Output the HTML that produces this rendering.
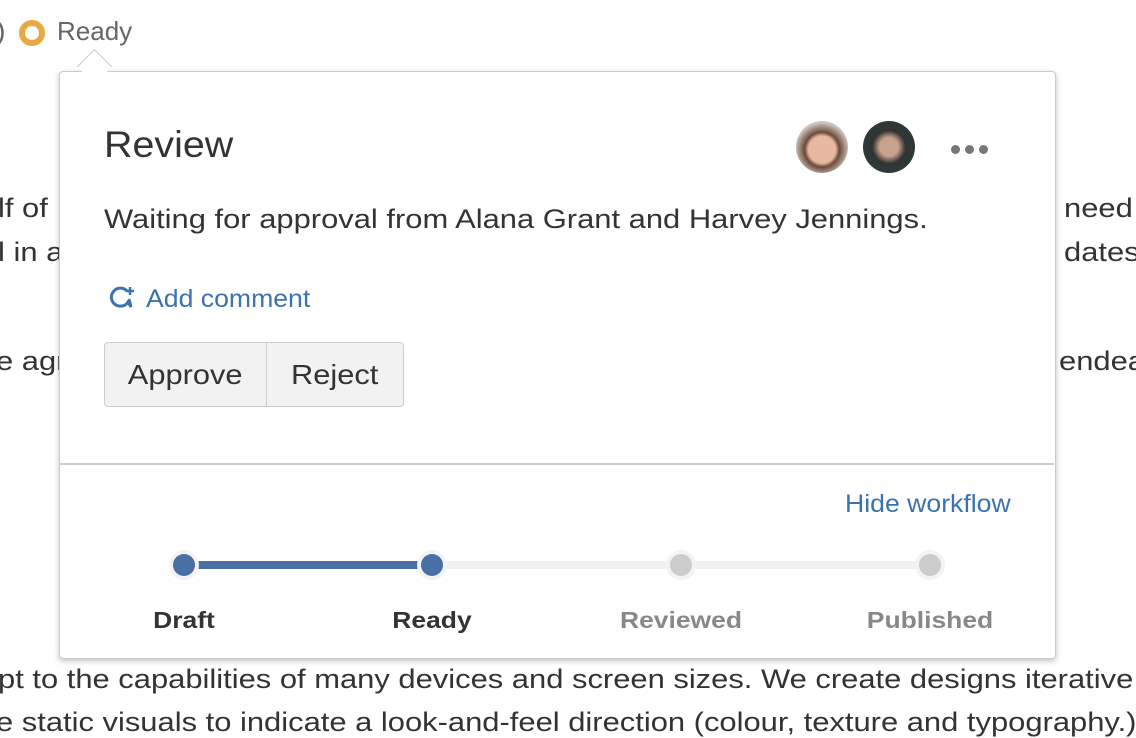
<!DOCTYPE html>
<html><head><style>
body{margin:0;width:1136px;height:726px;overflow:hidden;background:#fff;font-family:"Liberation Sans",sans-serif;color:#333;position:relative}
.t{position:absolute;font-size:27px;white-space:nowrap;color:#333;transform:scaleX(1.145);transform-origin:left center}
.s{transform:scaleX(1.065)}
.card{position:absolute;left:59px;top:71px;width:995px;height:586px;background:#fff;border:1px solid #ccc;border-radius:4px;box-shadow:0 2px 6px rgba(0,0,0,.25)}
.arrow{position:absolute;left:82px;top:54px;width:24px;height:24px;background:#fff;border-left:1px solid #ccc;border-top:1px solid #ccc;transform:rotate(45deg)}
.dot{position:absolute;width:22px;height:22px;border-radius:50%;top:554px;box-shadow:0 0 0 4px #f3f3f3}
.lbl{position:absolute;top:607px;font-weight:bold;font-size:23px;width:200px;text-align:center;transform:scaleX(1.15)}
</style></head><body>
<div class="t s" style="left:-4px;top:16px;color:#666">)</div>
<div style="position:absolute;left:19px;top:20px;width:14px;height:14px;border:6px solid #e9a842;border-radius:50%"></div>
<div class="t" style="left:57px;top:16px;color:#666;font-size:26px;transform:none">Ready</div>
<div class="t" style="left:-2px;top:193px">lf of</div>
<div class="t" style="left:-2px;top:237px">l in a</div>
<div class="t" style="left:-4px;top:346px">e agr</div>
<div class="t" style="left:1064px;top:193px">need</div>
<div class="t" style="left:1064px;top:237px">dates</div>
<div class="t" style="left:1059px;top:346px">endea</div>
<div class="t" style="left:-2px;top:664px">pt to the capabilities of many devices and screen sizes. We create designs iterative</div>
<div class="t" style="left:-4px;top:707px">e static visuals to indicate a look-and-feel direction (colour, texture and typography.)</div>
<div class="card"></div>
<div class="arrow"></div>
<div class="t s" style="left:104px;top:124px;font-size:37px;color:#333">Review</div>
<div style="position:absolute;left:796px;top:121px;width:52px;height:52px;border-radius:50%;background:radial-gradient(circle at 50% 55%,#e8b9a0 0 35%,#6b4a3a 45%,#cfc7c2 70%)"></div>
<div style="position:absolute;left:863px;top:121px;width:52px;height:52px;border-radius:50%;background:radial-gradient(circle at 50% 50%,#c9a28e 0 25%,#333 45%,#2c3a3a 70%)"></div>
<div style="position:absolute;left:951px;top:145px;display:flex;gap:5px"><i style="width:9px;height:9px;border-radius:50%;background:#777"></i><i style="width:9px;height:9px;border-radius:50%;background:#777"></i><i style="width:9px;height:9px;border-radius:50%;background:#777"></i></div>
<div class="t" style="left:104px;top:204px">Waiting for approval from Alana Grant and Harvey Jennings.</div>
<svg style="position:absolute;left:108px;top:285px" width="28" height="26" viewBox="0 0 28 26"><path d="M19 6 A9 9 0 1 0 20 17 L23 22 L21 14" fill="none" stroke="#3b73af" stroke-width="3"/><path d="M22 2v8M18 6h8" stroke="#3b73af" stroke-width="2.5"/></svg>
<div class="t s" style="left:146px;top:285px;font-size:25px;color:#3b73af">Add comment</div>
<div style="position:absolute;left:104px;top:342px;width:298px;height:63px;border:1px solid #ccc;border-radius:4px;background:#f2f2f2;display:flex;font-size:28px;color:#333">
<div style="width:161px;border-right:1px solid #ccc;text-align:center;line-height:63px"><span style="display:inline-block;transform:scaleX(1.1)">Approve</span></div>
<div style="flex:1;text-align:center;line-height:63px"><span style="display:inline-block;transform:scaleX(1.1)">Reject</span></div></div>
<div style="position:absolute;left:60px;top:463px;width:994px;height:2px;background:#ccc"></div>
<div class="t s" style="left:845px;top:490px;font-size:25px;color:#3b73af">Hide workflow</div>
<div style="position:absolute;left:184px;top:561px;width:746px;height:8px;background:#f1f1f1"></div>
<div style="position:absolute;left:184px;top:561px;width:248px;height:8px;background:#4a6fa5"></div>
<div class="dot" style="left:173px;background:#4a6fa5"></div>
<div class="dot" style="left:421px;background:#4a6fa5"></div>
<div class="dot" style="left:670px;background:#ccc"></div>
<div class="dot" style="left:919px;background:#ccc"></div>
<div class="lbl" style="left:84px;color:#333">Draft</div>
<div class="lbl" style="left:332px;color:#333">Ready</div>
<div class="lbl" style="left:581px;color:#888">Reviewed</div>
<div class="lbl" style="left:830px;color:#888">Published</div>
</body></html>
